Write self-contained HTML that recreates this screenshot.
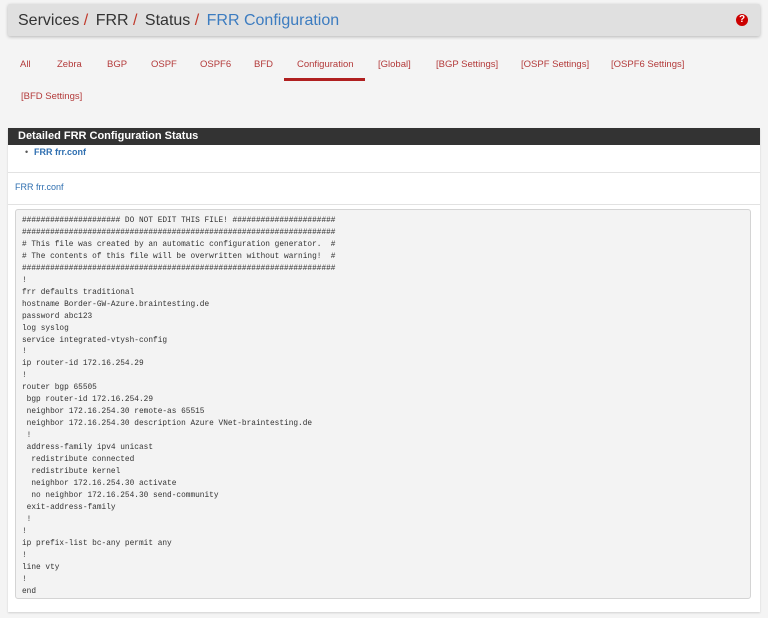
<!DOCTYPE html>
<html><head><meta charset="utf-8"><style>
body{margin:0;background:#f4f4f4;font-family:"Liberation Sans",sans-serif;width:768px;height:618px;position:relative;overflow:hidden}
.hdr{position:absolute;left:8px;top:4px;width:752px;height:32px;background:#e0e0e0;box-shadow:0 1px 3px rgba(0,0,0,.25);border-radius:2px}
.bc{position:absolute;left:10px;top:8px;font-size:16px;color:#333}
.bc i{font-style:normal;color:#c0392b;margin-right:3px}
.bc b{font-weight:normal;color:#3c7cc0}
.help{position:absolute;right:12px;top:10px;width:12px;height:12px;border-radius:50%;background:#c00;color:#fff;font-size:10px;font-weight:bold;text-align:center;line-height:12px}
.tab{position:absolute;font-size:9.5px;color:#b33a3a}
.ul{position:absolute;left:284px;top:78px;width:81px;height:3px;background:#b02020}
.panel{position:absolute;left:8px;top:128px;width:752px;height:484px;background:#fff;box-shadow:0 1px 2px rgba(0,0,0,.15)}
.ph{height:17px;background:#333;color:#fff;font-size:11px;font-weight:bold;line-height:17px;padding-left:10px}
.lnk{position:absolute;font-size:9px;color:#2f6fb0}
.sep{position:absolute;left:0;width:752px;height:1px;background:#e2e2e2}
pre{position:absolute;left:7px;top:81px;width:736px;height:390px;margin:0;background:#f3f3f3;border:1px solid #d4d4d4;border-radius:3px;font-family:"Liberation Mono",monospace;font-size:7.8px;line-height:11.95px;color:#333;padding:6px 0 0 6px;box-sizing:border-box}
</style></head><body>
<div class="hdr"><div class="bc">Services <i>/</i> FRR <i>/</i> Status <i>/</i> <b>FRR Configuration</b></div><div class="help">?</div></div>
<div class="tab" style="left:20px;top:59px">All</div>
<div class="tab" style="left:57px;top:59px">Zebra</div>
<div class="tab" style="left:107px;top:59px">BGP</div>
<div class="tab" style="left:151px;top:59px">OSPF</div>
<div class="tab" style="left:200px;top:59px">OSPF6</div>
<div class="tab" style="left:254px;top:59px">BFD</div>
<div class="tab" style="left:297px;top:59px">Configuration</div>
<div class="tab" style="left:378px;top:59px">[Global]</div>
<div class="tab" style="left:436px;top:59px">[BGP Settings]</div>
<div class="tab" style="left:521px;top:59px">[OSPF Settings]</div>
<div class="tab" style="left:611px;top:59px">[OSPF6 Settings]</div>
<div class="tab" style="left:21px;top:91px">[BFD Settings]</div>
<div class="ul"></div>
<div class="panel">
<div class="ph">Detailed FRR Configuration Status</div>
<div class="lnk" style="left:17px;top:19px;color:#555">•</div>
<div class="lnk" style="left:26px;top:19px;font-weight:bold">FRR frr.conf</div>
<div class="sep" style="top:44px"></div>
<div class="lnk" style="left:7px;top:54px">FRR frr.conf</div>
<div class="sep" style="top:76px"></div>
<pre>##################### DO NOT EDIT THIS FILE! ######################
###################################################################
# This file was created by an automatic configuration generator.  #
# The contents of this file will be overwritten without warning!  #
###################################################################
!
frr defaults traditional
hostname Border-GW-Azure.braintesting.de
password abc123
log syslog
service integrated-vtysh-config
!
ip router-id 172.16.254.29
!
router bgp 65505
 bgp router-id 172.16.254.29
 neighbor 172.16.254.30 remote-as 65515
 neighbor 172.16.254.30 description Azure VNet-braintesting.de
 !
 address-family ipv4 unicast
  redistribute connected
  redistribute kernel
  neighbor 172.16.254.30 activate
  no neighbor 172.16.254.30 send-community
 exit-address-family
 !
!
ip prefix-list bc-any permit any
!
line vty
!
end</pre>
</div>
</body></html>
